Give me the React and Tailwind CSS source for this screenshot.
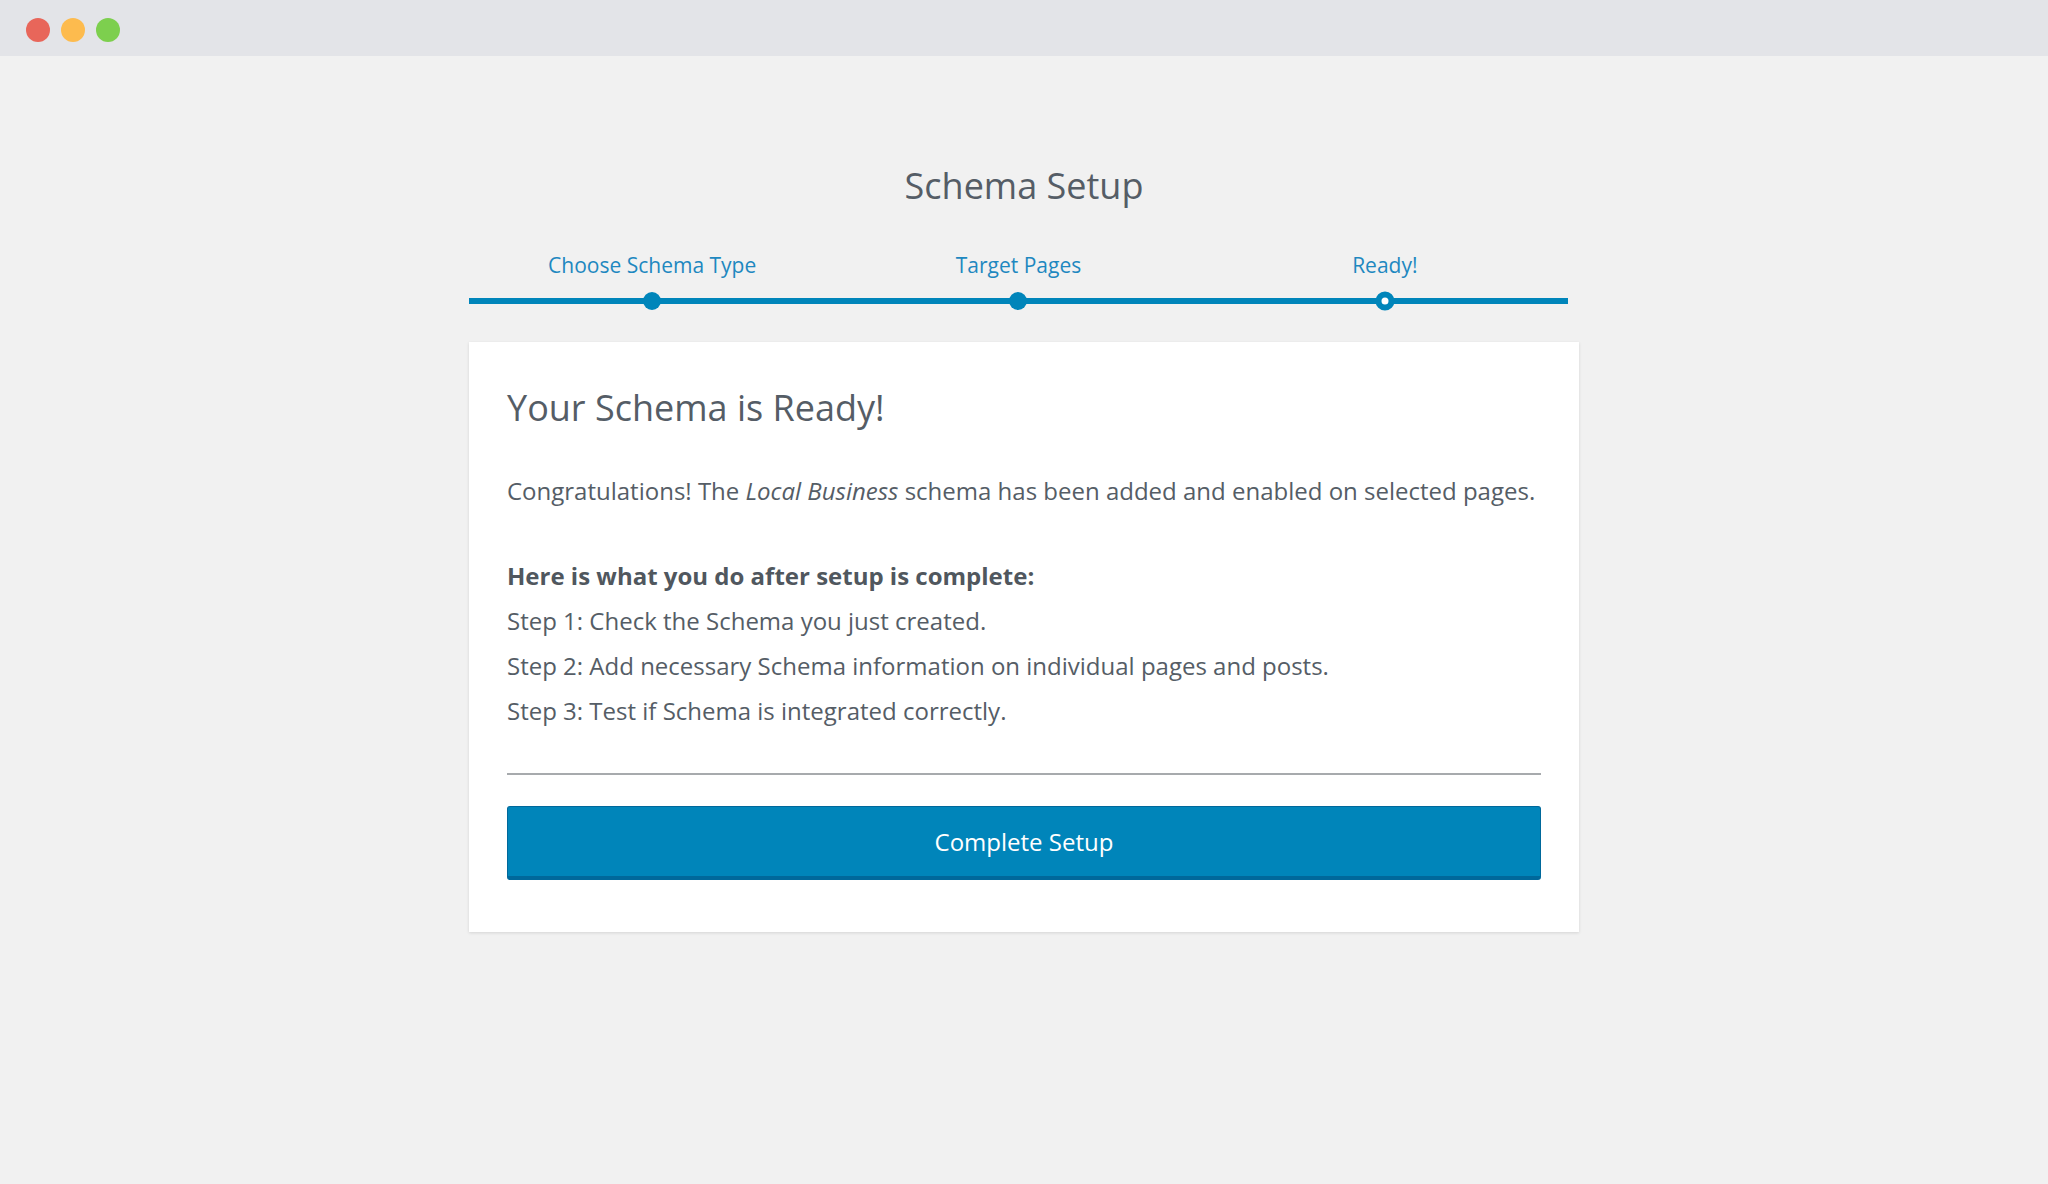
import React from "react";

const steps = ["Choose Schema Type", "Target Pages", "Ready!"];

export default function App() {
  return (
    <div className="min-h-[1184px] w-full bg-[#f1f1f1] text-[#555d66]" style={{ fontFamily: '"Open Sans", "Noto Sans", sans-serif' }}>
      <div className="flex h-[56px] items-start gap-[11px] bg-[#e3e4e8] pl-[26px] pt-[18px]">
        <span className="block h-[24px] w-[24px] rounded-full bg-[#e8665a]" />
        <span className="block h-[24px] w-[24px] rounded-full bg-[#fdbb4e]" />
        <span className="block h-[24px] w-[24px] rounded-full bg-[#7dcf4e]" />
      </div>

      <main className="mx-auto w-[1110px]">
        <h1 className="mt-[106px] text-center text-[36px] leading-[48px] font-normal text-[#555d66]">Schema Setup</h1>

        <div className="mt-[40px] grid w-[1099px] grid-cols-3">
          {steps.map((s, i) => (
            <div key={s} className="flex flex-col items-center">
              <div className="text-[21px] leading-[30px] text-[#1e88c0]">{s}</div>
              <div className="relative mt-[18px] h-[6px] w-full bg-[#0085ba]">
                {i < 2 ? (
                  <span className="absolute left-1/2 top-1/2 h-[18px] w-[18px] -translate-x-1/2 -translate-y-1/2 rounded-full bg-[#0085ba]" />
                ) : (
                  <span className="absolute left-1/2 top-1/2 h-[19px] w-[19px] -translate-x-1/2 -translate-y-1/2 rounded-full border-[6px] border-[#0085ba] bg-white" />
                )}
              </div>
            </div>
          ))}
        </div>

        <section className="mt-[38px] bg-white px-[38px] pt-[42px] pb-[52px] shadow-[0_1px_3px_rgba(0,0,0,0.12)]">
          <h2 className="text-[36px] leading-[48px] font-normal text-[#555d66]">Your Schema is Ready!</h2>
          <p className="mt-[43px] text-[24px] leading-[32px] whitespace-nowrap">
            Congratulations! The <em>Local Business</em> schema has been added and enabled on selected pages.
          </p>
          <div className="mt-[46px] text-[24px] leading-[45px]">
            <p className="font-bold text-[#50575e]">Here is what you do after setup is complete:</p>
            <p>Step 1: Check the Schema you just created.</p>
            <p>Step 2: Add necessary Schema information on individual pages and posts.</p>
            <p>Step 3: Test if Schema is integrated correctly.</p>
          </div>
          <div className="mt-[40px] h-[2px] bg-[#a7aaad]" />
          <button className="mt-[31px] flex h-[74px] w-full items-center justify-center rounded-[3px] border border-[#00689b] border-b-[4px] bg-[#0085ba] text-[24px] text-white">
            Complete Setup
          </button>
        </section>
      </main>
    </div>
  );
}
